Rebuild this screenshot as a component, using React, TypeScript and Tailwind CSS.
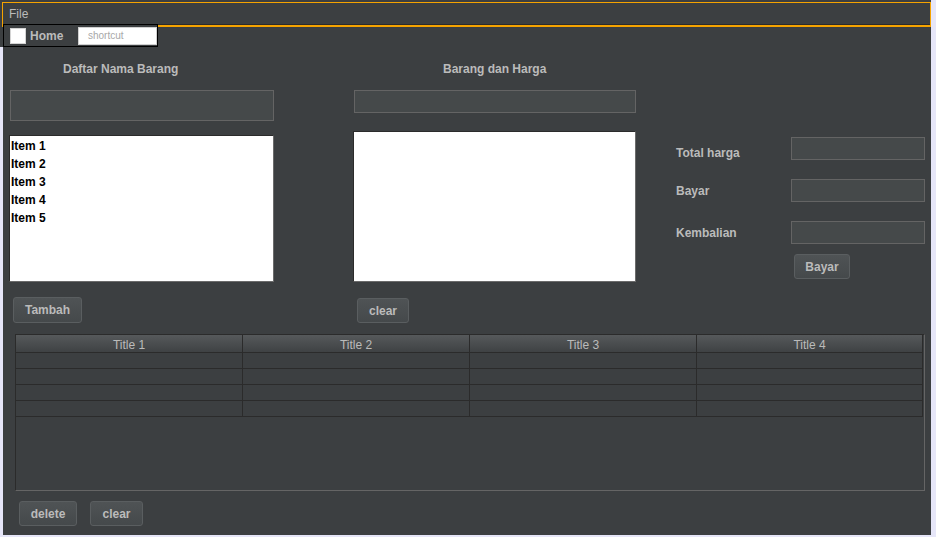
const field = "bg-[#45494a] border border-[#646464]"
const btn =
  "flex items-center justify-center rounded-[3px] border border-[#5a5e60] bg-linear-to-b from-[#4f5355] to-[#45494b] text-[12px] font-bold text-[#bbbbbb] leading-none"
const label = "text-[12px] leading-[14px] font-bold text-[#bbbbbb]"

const items = ["Item 1", "Item 2", "Item 3", "Item 4", "Item 5"]
const titles = ["Title 1", "Title 2", "Title 3", "Title 4"]
const cols = "grid grid-cols-[227px_227px_227px_226px]"

function Table() {
  return (
    <div className="ml-[12px] mt-[11px] h-[157px] w-[910px] border border-t-[#2b2b2b] border-l-[#2b2b2b] border-r-[#656565] border-b-[#656565] bg-[#3c3f41]">
      <div className={`${cols} h-[18px] w-[907px] border-b border-[#2b2b2b] bg-linear-to-b from-[#56595b] to-[#3f4244]`}>
        {titles.map((t) => (
          <div
            key={t}
            className="flex items-center justify-center border-r border-[#2b2b2b] pt-[2px] text-[12px] leading-none text-[#bbbbbb]"
          >
            {t}
          </div>
        ))}
      </div>
      {[0, 1, 2, 3].map((r) => (
        <div key={r} className={`${cols} h-[16px] w-[907px] border-b border-[#2b2b2b]`}>
          {titles.map((t) => (
            <div key={t} className="border-r border-[#2b2b2b]" />
          ))}
        </div>
      ))}
    </div>
  )
}

export default function App() {
  return (
    <div className="flex h-[537px] w-[936px] flex-col bg-[#e6e6f8] font-['Liberation_Sans',Arial,sans-serif]">
      {/* menu bar + toolbar */}
      <div className="h-[47px] w-[931px] bg-[#3c3f41] pt-[2px]">
        <div className="ml-[2px] h-[25px] w-[929px] border-x border-t border-b-2 border-[#f5a300]">
          <div className="flex h-[22px] items-center border-b border-[#2b2b2b] pl-[6px] text-[12px] text-[#bbbbbb]">
            File
          </div>
        </div>
        <div className="relative -mt-[3px] ml-[3px] flex h-[23px] w-[155px] items-center border border-black bg-[#3c3f41]">
          <div className="ml-[6px] h-[16px] w-[16px] border border-[#d4d4d4] bg-white" />
          <span className="ml-[4px] text-[12px] font-bold text-[#bbbbbb]">Home</span>
          <div className="ml-auto mr-0 flex h-[18px] w-[79px] items-center border border-[#d0d0d0] bg-white pl-[9px] text-[10px] text-[#a8a8a8]">
            shortcut
          </div>
        </div>
      </div>

      {/* main panel */}
      <div className="h-[488px] w-[931px] border-l-[3px] border-[#e6e6f8] bg-[#3c3f41]">
        <div className="flex items-start">
          {/* Daftar Nama Barang */}
          <div className="ml-[6px] flex w-[265px] flex-col pt-[15px]">
            <div className={`${label} ml-[54px]`}>Daftar Nama Barang</div>
            <div className={`${field} ml-[1px] mt-[14px] h-[31px] w-[264px]`} />
            <div className="mt-[14px] h-[147px] w-[265px] border border-t-[#2b2b2b] border-l-[#2b2b2b] border-r-[#6b6b6b] border-b-[#6b6b6b] bg-white pl-[1px] pt-[1px]">
              {items.map((it) => (
                <div key={it} className="h-[18px] text-[12px] font-bold leading-[18px] text-black">
                  {it}
                </div>
              ))}
            </div>
            <button className={`${btn} ml-[4px] mt-[15px] h-[26px] w-[69px]`}>Tambah</button>
          </div>

          {/* Barang dan Harga */}
          <div className="ml-[79px] flex w-[283px] flex-col pt-[15px]">
            <div className={`${label} ml-[90px]`}>Barang dan Harga</div>
            <div className={`${field} ml-[1px] mt-[14px] h-[23px] w-[282px]`} />
            <div className="mt-[18px] h-[151px] w-[283px] border border-t-[#2b2b2b] border-l-[#2b2b2b] border-r-[#6b6b6b] border-b-[#6b6b6b] bg-white" />
            <button className={`${btn} ml-[4px] mt-[16px] h-[25px] w-[52px]`}>clear</button>
          </div>

          {/* pembayaran */}
          <div className="ml-[40px] flex w-[249px] flex-col pt-[90px]">
            <div className="flex items-start">
              <div className={`${label} w-[115px] pt-[9px]`}>Total harga</div>
              <div className={`${field} h-[23px] w-[134px]`} />
            </div>
            <div className="mt-[19px] flex items-start">
              <div className={`${label} w-[115px] pt-[5px]`}>Bayar</div>
              <div className={`${field} h-[23px] w-[134px]`} />
            </div>
            <div className="mt-[19px] flex items-start">
              <div className={`${label} w-[115px] pt-[5px]`}>Kembalian</div>
              <div className={`${field} h-[23px] w-[134px]`} />
            </div>
            <button className={`${btn} ml-[118px] mt-[10px] h-[25px] w-[56px]`}>Bayar</button>
          </div>
        </div>

        <Table />

        <div className="ml-[16px] mt-[10px] flex gap-[13px]">
          <button className={`${btn} h-[25px] w-[58px]`}>delete</button>
          <button className={`${btn} h-[25px] w-[53px]`}>clear</button>
        </div>
      </div>
    </div>
  )
}
